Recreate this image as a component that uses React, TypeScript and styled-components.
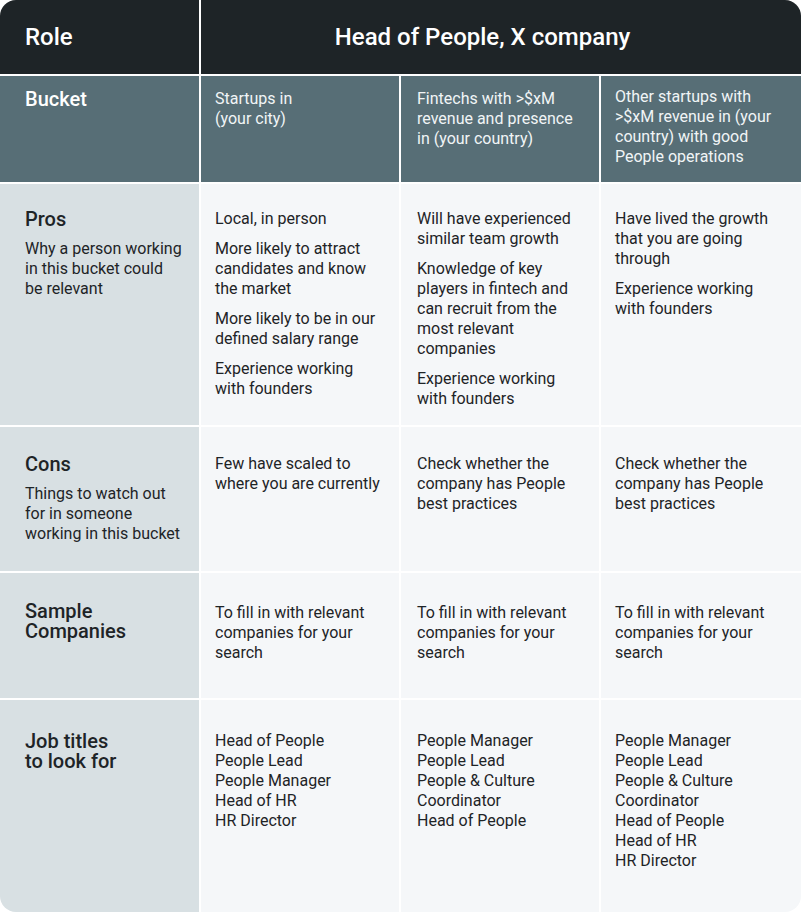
import { createGlobalStyle, styled } from "styled-components";

interface Row {
  title: string;
  note?: string;
  padTop: number;
  titleLift?: number;
  gap: number;
  cells: string[][];
}

const buckets = [
  "Startups in\n(your city)",
  "Fintechs with >$xM revenue and presence in (your country)",
  "Other startups with >$xM revenue in (your country) with good People operations",
];

// left padding of the three data columns
const insets = [14, 16, 14];

const rows: Row[] = [
  {
    title: "Pros",
    note: "Why a person working in this bucket could be relevant",
    padTop: 25,
    gap: 10,
    cells: [
      [
        "Local, in person",
        "More likely to attract candidates and know the market",
        "More likely to be in our defined salary range",
        "Experience working with founders",
      ],
      [
        "Will have experienced similar team growth",
        "Knowledge of key players in fintech and can recruit from the most relevant companies",
        "Experience working with founders",
      ],
      [
        "Have lived the growth that you are going through",
        "Experience working with founders",
      ],
    ],
  },
  {
    title: "Cons",
    note: "Things to watch out for in someone working in this bucket",
    padTop: 27,
    gap: 10,
    cells: [
      ["Few have scaled to where you are currently"],
      ["Check whether the company has People best practices"],
      ["Check whether the company has People best practices"],
    ],
  },
  {
    title: "Sample\nCompanies",
    padTop: 30,
    titleLift: 2,
    gap: 10,
    cells: [
      ["To fill in with relevant companies for your search"],
      ["To fill in with relevant companies for your search"],
      ["To fill in with relevant companies for your search"],
    ],
  },
  {
    title: "Job titles\nto look for",
    padTop: 31,
    gap: 0,
    cells: [
      ["Head of People", "People Lead", "People Manager", "Head of HR", "HR Director"],
      ["People Manager", "People Lead", "People & Culture Coordinator", "Head of People"],
      [
        "People Manager",
        "People Lead",
        "People & Culture Coordinator",
        "Head of People",
        "Head of HR",
        "HR Director",
      ],
    ],
  },
];

export default function App() {
  return (
    <>
      <GlobalStyle />
      <Table>
        <HeadLabel>Role</HeadLabel>
        <HeadTitle>Head of People, X company</HeadTitle>

        <BucketLabel>Bucket</BucketLabel>
        {buckets.map((b, i) => (
          <BucketCell key={b} $inset={insets[i]} $lift={i === 2 ? 2 : 0}>
            {b}
          </BucketCell>
        ))}

        {rows.map((row) => (
          <RowGroup key={row.title} row={row} />
        ))}
      </Table>
    </>
  );
}

function RowGroup({ row }: { row: Row }) {
  return (
    <>
      <RowLabel $padTop={row.padTop - (row.titleLift ?? 0)}>
        <RowTitle>{row.title}</RowTitle>
        {row.note && <RowNote>{row.note}</RowNote>}
      </RowLabel>
      {row.cells.map((items, i) => (
        <Cell
          key={`${row.title}-${i}`}
          $padTop={row.padTop}
          $gap={row.gap}
          $inset={insets[i]}
        >
          {items.map((item, j) => (
            <Item key={j}>{item}</Item>
          ))}
        </Cell>
      ))}
    </>
  );
}

const GlobalStyle = createGlobalStyle`
  body {
    margin: 0;
    background: #ffffff;
    font-family: Roboto, "Liberation Sans", sans-serif;
    -webkit-font-smoothing: antialiased;
  }
`;

const Table = styled.div`
  width: 801px;
  display: grid;
  grid-template-columns: 199px 198px 198px 200px;
  grid-template-rows: 74px 106px 241px 144px 125px 212px;
  gap: 2px;
  border-radius: 16px;
  overflow: hidden;
  background: #ffffff;
`;

const HeadLabel = styled.div`
  background: #1e2427;
  color: #ffffff;
  display: flex;
  align-items: center;
  padding-left: 25px;
  font-size: 24px;
  font-weight: 500;
`;

const HeadTitle = styled(HeadLabel)`
  grid-column: span 3;
  justify-content: center;
  padding-left: 0;
  padding-right: 37px;
`;

const BucketLabel = styled.div`
  background: #576e76;
  color: #ffffff;
  padding: 13px 0 0 25px;
  font-size: 20px;
  font-weight: 500;
  line-height: 20px;
`;

const BucketCell = styled.div<{ $inset: number; $lift: number }>`
  background: #576e76;
  color: #f1f5f6;
  padding: ${(p) => 13 - p.$lift}px 16px 0 ${(p) => p.$inset}px;
  font-size: 16px;
  line-height: 20px;
  white-space: pre-line;
`;

const RowLabel = styled.div<{ $padTop: number }>`
  background: #d8e0e3;
  color: #1e2427;
  padding: ${(p) => p.$padTop}px 16px 0 25px;
  display: flex;
  flex-direction: column;
  gap: 10px;
`;

const RowTitle = styled.div`
  font-size: 20px;
  font-weight: 500;
  line-height: 20px;
  white-space: pre-line;
`;

const RowNote = styled.div`
  font-size: 16px;
  line-height: 20px;
`;

const Cell = styled.div<{ $padTop: number; $gap: number; $inset: number }>`
  background: #f5f7f9;
  color: #1e2427;
  padding: ${(p) => p.$padTop}px 16px 0 ${(p) => p.$inset}px;
  display: flex;
  flex-direction: column;
  gap: ${(p) => p.$gap}px;
`;

const Item = styled.div`
  font-size: 16px;
  line-height: 20px;
`;
